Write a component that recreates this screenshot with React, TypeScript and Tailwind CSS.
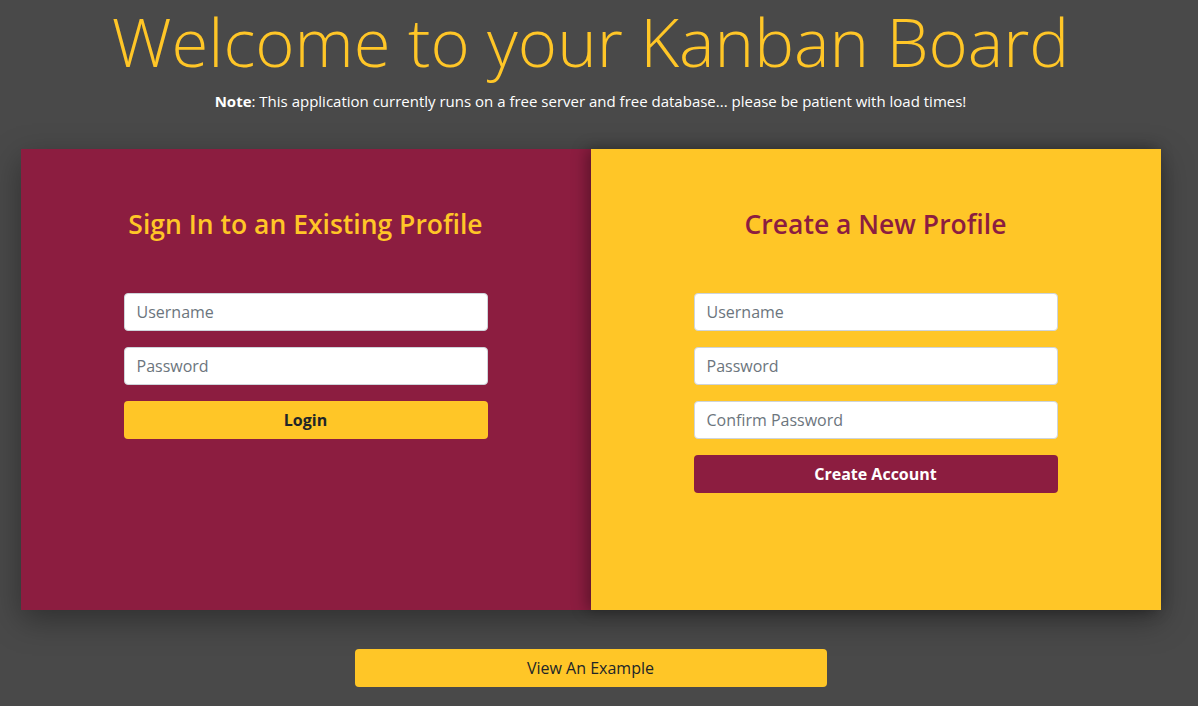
import React from "react";

const inputCls =
  "block w-full h-[38px] rounded-[4px] border border-[#ced4da] bg-white px-3 text-[16px] text-[#495057] placeholder:text-[#6c757d] outline-none";

export default function App() {
  return (
    <div
      className="min-h-screen w-full bg-[#494949] overflow-hidden"
      style={{ fontFamily: '"Open Sans", "Noto Sans", sans-serif' }}
    >
      <div className="w-[1181px]">
        <h1 className="pt-[1px] text-center text-[67px] font-light leading-[80px] text-[#ffc627]">
          Welcome to your Kanban Board
        </h1>
        <p className="mt-[8px] text-center text-[15px] leading-[24px] text-white">
          <span className="font-bold">Note</span>: This application currently runs on a free server and free database... please be patient with load times!
        </p>

        <div className="mx-auto mt-[36px] flex h-[461px] w-[1140px] shadow-[0_10px_30px_rgba(0,0,0,0.35)]">
          <div className="relative flex w-1/2 flex-col items-center bg-[#8c1d40] pt-[58px]">
            <h3 className="h-[34px] text-[26.5px] font-semibold leading-[34px] text-[#ffc627]">
              Sign In to an Existing Profile
            </h3>
            <form className="mt-[52px] flex w-[364px] flex-col gap-4" onSubmit={(e) => e.preventDefault()}>
              <input className={inputCls} placeholder="Username" />
              <input className={inputCls} type="password" placeholder="Password" />
              <button className="h-[38px] w-full rounded-[4px] bg-[#ffc627] text-[16px] font-bold text-[#212529]">
                Login
              </button>
            </form>
          </div>
          <div className="relative z-10 flex w-1/2 flex-col items-center bg-[#ffc627] pt-[58px] shadow-[-4px_0_14px_rgba(0,0,0,0.35)]">
            <h3 className="h-[34px] text-[26.5px] font-semibold leading-[34px] text-[#8c1d40]">
              Create a New Profile
            </h3>
            <form className="mt-[52px] flex w-[364px] flex-col gap-4" onSubmit={(e) => e.preventDefault()}>
              <input className={inputCls} placeholder="Username" />
              <input className={inputCls} type="password" placeholder="Password" />
              <input className={inputCls} type="password" placeholder="Confirm Password" />
              <button className="h-[38px] w-full rounded-[4px] bg-[#8c1d40] text-[16px] font-bold text-white">
                Create Account
              </button>
            </form>
          </div>
        </div>

        <div className="mt-[39px] flex justify-center">
          <button className="h-[38px] w-[472px] rounded-[4px] bg-[#ffc627] text-[16px] text-[#212529]">
            View An Example
          </button>
        </div>
      </div>
    </div>
  );
}
